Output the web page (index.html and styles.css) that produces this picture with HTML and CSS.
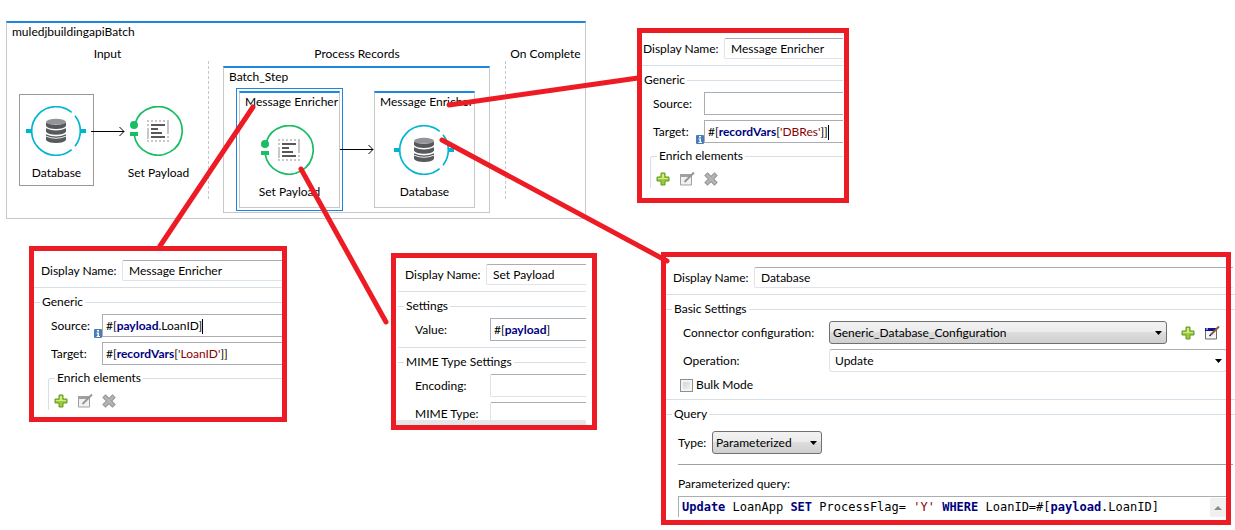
FILE: index.html
```
<!DOCTYPE html>
<html lang="en">

<head>
    <meta charset="UTF-8">
    <meta name="viewport" content="width=device-width, initial-scale=1.0">
    <title>muledjbuildingapiBatch</title>
    <link rel="stylesheet" href="styles.css">
</head>
<body>
    <svg class="sprite" aria-hidden="true">
        <symbol id="icon-database" viewBox="-30 -25 62 50">
            <path d="M15.6 -18.6A24.3 24.3 0 1 0 15.6 18.6M19 -15.2A24.3 24.3 0 0 1 19 15.2" fill="none" stroke="#00b5d3" stroke-width="1.7"/>
            <path d="M-30 -2h6v4h-6zM25 -2h5v4h-5z" fill="#00b5d3"/>
            <path d="M-10 -8.4Q0 -3.8 10 -8.4V-5Q8 -2 0 -2T-10 -5zM-10 -2.8Q0 1.8 10 -2.8V0.8Q8 3.8 0 3.8T-10 0.8zM-10 3.2Q0 7.8 10 3.2V9Q8 12 0 12T-10 9z" fill="#58595b"/>
            <path d="M-10 5.2Q0 9.4 10 5.2" fill="none" stroke="#fff" stroke-width="0.9"/>
            <ellipse cx="0" cy="-9.2" rx="10" ry="3" fill="#939598"/>
        </symbol>
        <symbol id="icon-payload" viewBox="-30 -25 62 50">
            <path d="M-23 -7.6A24.2 24.2 0 1 1 -23.9 3.6" fill="none" stroke="#1abc64" stroke-width="1.7"/>
            <circle cx="-24" cy="-6" r="4" fill="#1abc64"/>
            <path d="M-28 1h8v4h-8z" fill="#1abc64"/>
            <path d="M-11 -10H7M-11 10H7" fill="none" stroke="#c8c8c8" stroke-width="2" stroke-dasharray="2 2"/>
            <path d="M-10 -7v2M-10 -3V8M10 -11V3M10 5v2M10 9v2" fill="none" stroke="#c8c8c8" stroke-width="2"/>
            <path d="M-7 -6H7M-7 -2H0M-7 2H4M-7 6H7" fill="none" stroke="#58595b" stroke-width="2"/>
        </symbol>
        <symbol id="icon-add" viewBox="0 0 14 14">
            <path d="M5 1h4v4h4v4h-4v4h-4v-4h-4v-4h4z" fill="#9ccb3b" stroke="#5c9a28" stroke-width="1"/>
            <path d="M6 2h2v4h4v1h-10v-1h4z" fill="#dbe97a"/>
        </symbol>
        <symbol id="icon-edit-off" viewBox="0 0 16 14">
            <path d="M1.500 3.500h11v9.500h-11z" fill="#f1f1f1" stroke="#a0a0a0"/>
            <path d="M1 2h11v3h-11z" fill="#a0a0a0"/>
            <path d="M15 0.500L7 8.500L5.500 10" stroke="#969696" stroke-width="2" fill="none"/>
        </symbol>
        <symbol id="icon-edit" viewBox="0 0 16 14">
            <path d="M1.500 3.500h11v9.500h-11z" fill="#f4f6fb" stroke="#6d6d62"/>
            <path d="M1 2h11v3h-11z" fill="#10109a"/>
            <path d="M2 3h2" stroke="#fff"/>
            <path d="M15 0.500L7 8.500" stroke="#8a5a32" stroke-width="2" fill="none"/>
            <path d="M7 8.500L5.500 10" stroke="#222" stroke-width="1.500"/>
        </symbol>
        <symbol id="icon-delete-off" viewBox="0 0 14 14">
            <path d="M3.500 3.500L10.500 10.500M10.500 3.500L3.500 10.500" stroke="#929292" stroke-width="4.600" stroke-linecap="square"/>
            <path d="M3.500 3.500L10.500 10.500M10.500 3.500L3.500 10.500" stroke="#b4b4b4" stroke-width="2.800" stroke-linecap="square"/>
        </symbol>
        <symbol id="icon-info" viewBox="0 0 8 9">
            <rect width="8" height="9" rx="1" fill="#4a7db3"/>
            <path d="M3 1h2v1.400h-2zM2.500 3.500h2.500v3.500h1v1h-3.500v-1h1v-2.500h-1z" fill="#fff"/>
        </symbol>
    </svg>

    <main class="canvas">
        <!-- Batch job flow -->
        <section class="batch">
            <h1 class="box-title">muledjbuildingapiBatch</h1>
            <div class="stages">
                <div class="stage">
                    <h2>Input</h2>
                    <div class="flow input-flow">
                        <div class="node selected">
                            <svg class="node-icon"><use href="#icon-database"/></svg>
                            <span>Database</span>
                        </div>
                        <svg class="arrow" viewBox="0 0 34 10"><path d="M0 5.500H33M28.500 1L33 5.500L28.500 10"/></svg>
                        <div class="node">
                            <svg class="node-icon"><use href="#icon-payload"/></svg>
                            <span>Set Payload</span>
                        </div>
                    </div>
                </div>
                <div class="divider"></div>
                <div class="stage">
                    <h2>Process Records</h2>
                    <div class="step">
                        <h3 class="box-title">Batch_Step</h3>
                        <div class="flow">
                            <div class="enricher active">
                                <h4>Message Enricher</h4>
                                <svg class="node-icon"><use href="#icon-payload"/></svg>
                                <span>Set Payload</span>
                            </div>
                            <svg class="arrow" viewBox="0 0 34 10"><path d="M0 5.500H33M28.500 1L33 5.500L28.500 10"/></svg>
                            <div class="enricher">
                                <h4>Message Enricher</h4>
                                <svg class="node-icon"><use href="#icon-database"/></svg>
                                <span>Database</span>
                            </div>
                        </div>
                    </div>
                </div>
                <div class="divider"></div>
                <div class="stage">
                    <h2>On Complete</h2>
                </div>
            </div>
        </section>

        <!-- Second enricher: result target -->
        <section class="callout callout-target">
            <form class="props">
                <div class="name-row">
                    <label for="target-name">Display Name:</label>
                    <input type="text" id="target-name" class="field" value="Message Enricher">
                </div>
                <fieldset>
                    <legend>Generic</legend>
                    <div class="row">
                        <label for="target-source">Source:</label>
                        <input type="text" id="target-source" class="field expr">
                    </div>
                    <div class="row">
                        <span class="row-label"><span id="target-target">Target:</span><svg class="info"><use href="#icon-info"/></svg></span>
                        <div class="field expr" role="textbox" contenteditable="true" aria-labelledby="target-target">#[<b>recordVars</b>[<i>'DBRes'</i>]]<span class="caret"></span></div>
                    </div>
                    <fieldset class="enrich">
                        <legend>Enrich elements</legend>
                        <div class="toolbar">
                            <button type="button" aria-label="Add"><svg><use href="#icon-add"/></svg></button>
                            <button type="button" aria-label="Edit" disabled><svg><use href="#icon-edit-off"/></svg></button>
                            <button type="button" aria-label="Delete" disabled><svg><use href="#icon-delete-off"/></svg></button>
                        </div>
                    </fieldset>
                </fieldset>
            </form>
        </section>

        <!-- First enricher: payload source -->
        <section class="callout callout-source">
            <form class="props">
                <div class="name-row">
                    <label for="source-name">Display Name:</label>
                    <input type="text" id="source-name" class="field" value="Message Enricher">
                </div>
                <fieldset>
                    <legend>Generic</legend>
                    <div class="row">
                        <span class="row-label"><span id="source-source">Source:</span><svg class="info"><use href="#icon-info"/></svg></span>
                        <div class="field expr" role="textbox" contenteditable="true" aria-labelledby="source-source">#[<b>payload</b>.LoanID]<span class="caret"></span></div>
                    </div>
                    <div class="row">
                        <span class="row-label" id="source-target">Target:</span>
                        <div class="field expr" role="textbox" contenteditable="true" aria-labelledby="source-target">#[<b>recordVars</b>[<i>'LoanID'</i>]]</div>
                    </div>
                    <fieldset class="enrich">
                        <legend>Enrich elements</legend>
                        <div class="toolbar">
                            <button type="button" aria-label="Add"><svg><use href="#icon-add"/></svg></button>
                            <button type="button" aria-label="Edit" disabled><svg><use href="#icon-edit-off"/></svg></button>
                            <button type="button" aria-label="Delete" disabled><svg><use href="#icon-delete-off"/></svg></button>
                        </div>
                    </fieldset>
                </fieldset>
            </form>
        </section>

        <!-- Set Payload -->
        <section class="callout callout-payload">
            <form class="props">
                <div class="name-row">
                    <label for="payload-name">Display Name:</label>
                    <input type="text" id="payload-name" class="field" value="Set Payload">
                </div>
                <fieldset class="closed">
                    <legend>Settings</legend>
                    <div class="row">
                        <span class="row-label" id="payload-value">Value:</span>
                        <div class="field expr" role="textbox" contenteditable="true" aria-labelledby="payload-value">#[<b>payload</b>]</div>
                    </div>
                </fieldset>
                <fieldset>
                    <legend>MIME Type Settings</legend>
                    <div class="row">
                        <label for="payload-encoding">Encoding:</label>
                        <input type="text" id="payload-encoding" class="field">
                    </div>
                    <div class="row">
                        <label for="payload-mime">MIME Type:</label>
                        <input type="text" id="payload-mime" class="field">
                    </div>
                </fieldset>
            </form>
            <div class="status-strip"></div>
        </section>

        <!-- Database connector -->
        <section class="callout callout-database">
            <form class="props">
                <div class="name-row">
                    <label for="db-name">Display Name:</label>
                    <input type="text" id="db-name" class="field" value="Database">
                </div>
                <fieldset class="closed">
                    <legend>Basic Settings</legend>
                    <div class="row">
                        <label for="db-config">Connector configuration:</label>
                        <div class="config">
                            <select id="db-config" class="combo"><option>Generic_Database_Configuration</option></select>
                            <button type="button" aria-label="Add configuration"><svg><use href="#icon-add"/></svg></button>
                            <button type="button" aria-label="Edit configuration"><svg><use href="#icon-edit"/></svg></button>
                        </div>
                    </div>
                    <div class="row">
                        <label for="db-operation">Operation:</label>
                        <select id="db-operation" class="combo flat"><option>Update</option></select>
                    </div>
                    <div class="check">
                        <input type="checkbox" id="db-bulk">
                        <label for="db-bulk">Bulk Mode</label>
                    </div>
                </fieldset>
                <fieldset>
                    <legend>Query</legend>
                    <div class="type-row">
                        <label for="db-type">Type:</label>
                        <select id="db-type" class="combo"><option>Parameterized</option></select>
                    </div>
                    <hr>
                    <p id="query-label" class="query-label">Parameterized query:</p>
                    <div class="query">
                        <div class="sql" role="textbox" contenteditable="true" aria-labelledby="query-label"><b>Update</b> LoanApp <b>SET</b> ProcessFlag= <i>'Y'</i> <b>WHERE</b> LoanID=#[<b>payload</b>.LoanID]</div>
                        <button type="button" class="scroll-up" aria-label="Scroll up"></button>
                    </div>
                </fieldset>
            </form>
        </section>

        <svg class="links" aria-hidden="true">
            <path d="M253 107L160 246M301 169L386 322M449 105L638 78M442 140L667 261"/>
        </svg>
    </main>
</body>
</html>
```
FILE: styles.css
```
* {
    box-sizing: border-box;
}
body {
    margin: 0;
    background: white;
    color: black;
    font-family: Lato, 'Open Sans', sans-serif;
    font-size: 12px;
    line-height: 16px;
    overflow-x: hidden;
}
h1, h2, h3, h4, p {
    margin: 0;
    font-size: 12px;
    font-weight: normal;
    white-space: nowrap;
}
input, select, button {
    font: inherit;
    color: inherit;
    margin: 0;
}
svg {
    display: block;
    flex: none;
}
.sprite {
    position: absolute;
    width: 0;
    height: 0;
}
.canvas {
    position: relative;
    min-height: 530px;
}

/* flow diagram */
.batch {
    position: absolute;
    left: 6px;
    top: 21px;
    width: 580px;
    border: 1px solid #c8c8c8;
    border-top: 2px solid #1b87e0;
}
.box-title {
    padding: 1px 5px 6px;
}
.stages {
    display: grid;
    grid-template-columns: 201px 1px 296px 1px 1fr;
}
.stage {
    text-align: center;
    padding-bottom: 5px;
}
.divider {
    border-left: 1px dashed #c8c8c8;
    margin: 15px 0 19px;
}
.flow {
    display: flex;
}
.input-flow {
    padding: 32px 0 0 12px;
}
.node {
    display: flex;
    flex-direction: column;
    align-items: center;
    width: 75px;
    padding: 11px 0 4px;
    border: 1px solid transparent;
    gap: 9px;
    white-space: nowrap;
}
.node.selected {
    border-color: #999;
}
.node-icon {
    width: 62px;
    height: 50px;
}
.arrow {
    width: 34px;
    height: 10px;
    margin-top: 53px;
    fill: none;
    stroke: black;
    stroke-width: 1px;
}
.input-flow .arrow {
    margin: 32px -4px 0 -3px;
}
.step {
    margin: 4px 15px 0 14px;
    border: 1px solid #c8c8c8;
    border-top: 2px solid #1b87e0;
    text-align: left;
}
.step .flow {
    padding: 0 14px 4px 15px;
}
.enricher {
    display: flex;
    flex-direction: column;
    align-items: center;
    width: 101px;
    padding: 1px 0 7px;
    border: 1px solid #c8c8c8;
    border-top: 2px solid #1b87e0;
    gap: 9px;
}
.enricher.active {
    outline: 1px solid #1b87e0;
    outline-offset: 2px;
}
.enricher h4 {
    align-self: flex-start;
    padding: 0 0 6px 5px;
}

/* callouts */
.callout {
    position: absolute;
    border: 5px solid #ed1c24;
    background: white;
}
.callout-target {
    --label: 51px;
    --pad: 1px;
    left: 637px;
    top: 28px;
    width: 212px;
    padding: 5px 1px 10px 0;
}
.callout-source {
    --label: 51px;
    --pad: 7px;
    left: 29px;
    top: 246px;
    width: 258px;
    padding: 9px 0 7px;
}
.callout-payload {
    --label: 75px;
    --pad: 7px;
    left: 391px;
    top: 253px;
    width: 206px;
    padding: 6px 6px 0 2px;
}
.callout-database {
    --label: 146px;
    --pad: 7px;
    left: 661px;
    right: 0;
    top: 252px;
    border-right: 0;
    border-bottom: 0;
    border-color: transparent;
    padding: 10px 0 8px;
}
/* the frame sits on top of the sheet, which runs on to the window edge */
.callout-database::after {
    content: "";
    position: absolute;
    inset: -5px 4px 0 -5px;
    border: 5px solid #ed1c24;
    pointer-events: none;
}
.callout-payload .props {
    height: 156px;
    overflow: hidden;
}
.status-strip {
    height: 5px;
    margin: 0 0 0 -2px;
    background: #e4e7ea;
}

/* property sheet */
fieldset {
    min-width: 0;
    margin: 6px 0 0;
    padding: 4px 0 0 calc(var(--pad) + 10px);
    border: 0;
    border-top: 1px solid #d5dfe8;
}
legend {
    margin-left: -11px;
    padding: 0 2px;
}
.closed {
    padding-bottom: 6px;
    border-bottom: 1px solid #d5dfe8;
}
.name-row {
    display: grid;
    grid-template-columns: 81px 1fr;
    align-items: center;
    padding: 0 0 6px var(--pad);
    border-bottom: 1px solid #d5dfe8;
    white-space: nowrap;
}
.name-row .field {
    height: 21px;
}
.row {
    display: grid;
    grid-template-columns: var(--label) 1fr;
    align-items: center;
    margin-bottom: 5px;
    white-space: nowrap;
}
.closed .row:last-child {
    margin-bottom: 0;
}
.row-label {
    display: flex;
    justify-content: space-between;
}
.info {
    width: 8px;
    height: 9px;
    margin: 11px 0 -4px;
}
.field {
    width: 100%;
    min-width: 0;
    height: 23px;
    padding: 0 6px;
    border: 1px solid #e2e3ea;
    border-top-color: #abadb3;
    border-right: 0;
    border-radius: 2px 0 0 2px;
    background: white;
    outline: 0;
}
.field.expr {
    padding: 3px 3px 2px;
    border-color: #abadb3;
    border-radius: 0;
}
.field b, .sql b {
    color: #00007f;
}
.field i, .sql i {
    color: #8b0000;
    font-style: normal;
}
.caret {
    display: inline-block;
    width: 1px;
    height: 15px;
    background: black;
    vertical-align: middle;
}
.enrich {
    margin: 0 0 0 -3px;
    padding: 8px 0 2px 4px;
    border-left: 1px solid #d5dfe8;
    border-top-left-radius: 3px;
}
.enrich legend {
    margin-left: 2px;
}
.toolbar {
    display: flex;
    gap: 8px;
}
button {
    width: 16px;
    height: 14px;
    padding: 0;
    border: 0;
    background: none;
}
button svg {
    width: 16px;
    height: 14px;
}
.combo {
    width: 100%;
    height: 23px;
    padding: 0 20px 0 3px;
    border: 1px solid #707070;
    border-radius: 3px;
    appearance: none;
    background: url("data:image/svg+xml,%3Csvg xmlns='http://www.w3.org/2000/svg' width='7' height='4'%3E%3Cpath d='M0 0h7L3.5 4z'/%3E%3C/svg%3E") no-repeat right 4px center, linear-gradient(#f2f2f2, #ebebeb 50%, #dddddd 50%, #cfcfcf);
}
.combo.flat {
    width: calc(100% - 8px);
    padding-left: 5px;
    border-color: #abadb3 #e2e3ea #e2e3ea;
    background-color: white;
    background-image: url("data:image/svg+xml,%3Csvg xmlns='http://www.w3.org/2000/svg' width='7' height='4'%3E%3Cpath d='M0 0h7L3.5 4z'/%3E%3C/svg%3E");
}
.callout-database .name-row {
    padding-right: 2px;
}
.config {
    display: flex;
    align-items: center;
    gap: 8px;
    padding-right: 15px;
}
.config .combo {
    flex: 1;
    min-width: 0;
    margin-right: 5px;
}
.check {
    display: flex;
    align-items: center;
    gap: 3px;
    margin-left: -3px;
    height: 16px;
}
.check input {
    appearance: none;
    width: 13px;
    height: 13px;
    border: 1px solid #8e8f8f;
    background: linear-gradient(135deg, #cbcfd5, #f6f6f6);
    box-shadow: inset 0 0 0 2px #f4f4f4;
}
.check input:checked {
    background: #4a7db3;
}
.type-row {
    display: grid;
    grid-template-columns: 34px 110px;
    align-items: center;
    margin-left: -5px;
    padding-top: 5px;
}
hr {
    margin: 10px 2px 11px -5px;
    border: 0;
    border-top: 1px solid #a0a0a0;
}
.query-label {
    margin-left: -5px;
}
.query {
    display: flex;
    margin: 4px 9px 0 -5px;
    height: 21px;
    border: 1px solid #abadb3;
    border-width: 1px 0 0 1px;
}
.sql {
    flex: 1;
    min-width: 0;
    padding: 2px 3px;
    font-family: 'DejaVu Sans Mono', monospace;
    font-size: 12px;
    white-space: nowrap;
    overflow: hidden;
    outline: 0;
}
.scroll-up {
    display: flex;
    align-items: center;
    justify-content: center;
    height: auto;
    margin-top: 1px;
    background: #f0f0f0;
}
.scroll-up::before {
    content: "";
    border: 4px solid transparent;
    border-top: 0;
    border-bottom-color: #8c8c8c;
}

/* lines from nodes to callouts */
.links {
    position: absolute;
    left: 0;
    top: 0;
    width: 100%;
    height: 100%;
    fill: none;
    stroke: #ed1c24;
    stroke-width: 5px;
    stroke-linecap: round;
    pointer-events: none;
}
```
